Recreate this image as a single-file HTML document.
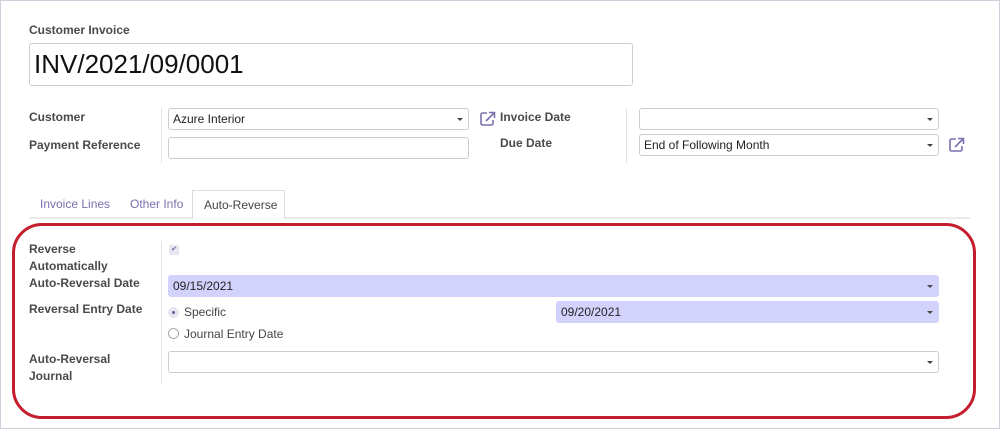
<!DOCTYPE html>
<html><head><meta charset="utf-8"><style>
*{box-sizing:border-box;margin:0;padding:0}
body{width:1000px;height:429px;background:#fff;font-family:"Liberation Sans",sans-serif;color:#444;position:relative;overflow:hidden}
.frame{position:absolute;left:0;top:0;width:1000px;height:429px;border:1px solid #d0d0dc}
.a{position:absolute}
.lb{position:absolute;font-size:12px;font-weight:bold;color:#4a4a4a;line-height:17px}
.in{position:absolute;border:1px solid #ccc;border-radius:3px;height:22px;font-size:12px;color:#222;padding:4px 4px;line-height:13px;background:#fff}
.sel::after{content:"";position:absolute;right:5px;top:9px;border-left:3px solid transparent;border-right:3px solid transparent;border-top:3px solid #444}
.hl{background:#d2d2fc;border-color:#d2d2fc}
.sep{position:absolute;width:1px;background:#e2e2e2}
</style></head><body>
<div class="frame"></div>
<div class="lb" style="left:29px;top:22px">Customer Invoice</div>
<div class="in" style="left:29px;top:43px;width:604px;height:43px;font-size:26px;line-height:30px;padding:5px 4px;color:#111">INV/2021/09/0001</div>

<div class="lb" style="left:29px;top:109px">Customer</div>
<div class="lb" style="left:29px;top:137px">Payment Reference</div>
<div class="sep" style="left:161px;top:108px;height:55px"></div>
<div class="in sel" style="left:168px;top:108px;width:301px">Azure Interior</div>
<div class="in" style="left:168px;top:137px;width:301px"></div>
<svg class="a" style="left:479px;top:110px" width="18" height="18" viewBox="0 0 18 18" fill="none" stroke="#7c6fb0" stroke-width="1.6"><path d="M8 3H3.5a1.5 1.5 0 0 0-1.5 1.5v9A1.5 1.5 0 0 0 3.5 15h9a1.5 1.5 0 0 0 1.5-1.5V10"/><path d="M7 11L15 3M10 2.5h5.5V8"/></svg>
<div class="lb" style="left:500px;top:109px">Invoice Date</div>
<div class="lb" style="left:500px;top:135px">Due Date</div>
<div class="sep" style="left:626px;top:108px;height:55px"></div>
<div class="in sel" style="left:639px;top:108px;width:300px"></div>
<div class="in sel" style="left:639px;top:134px;width:300px">End of Following Month</div>
<svg class="a" style="left:948px;top:136px" width="18" height="18" viewBox="0 0 18 18" fill="none" stroke="#7c6fb0" stroke-width="1.6"><path d="M8 3H3.5a1.5 1.5 0 0 0-1.5 1.5v9A1.5 1.5 0 0 0 3.5 15h9a1.5 1.5 0 0 0 1.5-1.5V10"/><path d="M7 11L15 3M10 2.5h5.5V8"/></svg>

<div class="a" style="left:29px;top:217px;width:941px;height:2px;background:#eaeaea"></div>
<div class="a" style="left:40px;top:197px;font-size:12px;color:#7c6fb0">Invoice Lines</div>
<div class="a" style="left:130px;top:197px;font-size:12px;color:#7c6fb0">Other Info</div>
<div class="a" style="left:192px;top:190px;width:93px;height:29px;border:1px solid #ddd;border-bottom:none;background:#fff;font-size:12px;color:#444;padding:7px 0 0 11px">Auto-Reverse</div>

<div class="a" style="left:12px;top:223px;width:964px;height:196px;border:3px solid #c41e2e;border-radius:30px"></div>
<div class="lb" style="left:29px;top:241px">Reverse<br>Automatically<br>Auto-Reversal Date</div>
<div class="lb" style="left:29px;top:301px">Reversal Entry Date</div>
<div class="lb" style="left:29px;top:351px">Auto-Reversal<br>Journal</div>
<div class="sep" style="left:161px;top:241px;height:143px"></div>
<div class="a" style="left:169px;top:245px;width:10px;height:10px;background:#e6e6f0;border-radius:2px;font-size:7px;color:#6a5fa0;text-align:center;line-height:10px">✔</div>
<div class="in sel hl" style="left:168px;top:275px;width:771px">09/15/2021</div>
<div class="a" style="left:168px;top:307px;width:11px;height:11px;border-radius:50%;background:#e6e6f0"></div>
<div class="a" style="left:172px;top:311px;width:3px;height:3px;border-radius:50%;background:#6a5fa0"></div>
<div class="a" style="left:184px;top:305px;font-size:12px;color:#444">Specific</div>
<div class="in sel hl" style="left:556px;top:301px;width:383px">09/20/2021</div>
<div class="a" style="left:168px;top:328px;width:11px;height:11px;border-radius:50%;border:1px solid #aaa"></div>
<div class="a" style="left:184px;top:327px;font-size:12px;color:#444">Journal Entry Date</div>
<div class="in sel" style="left:168px;top:351px;width:771px"></div>
</body></html>
